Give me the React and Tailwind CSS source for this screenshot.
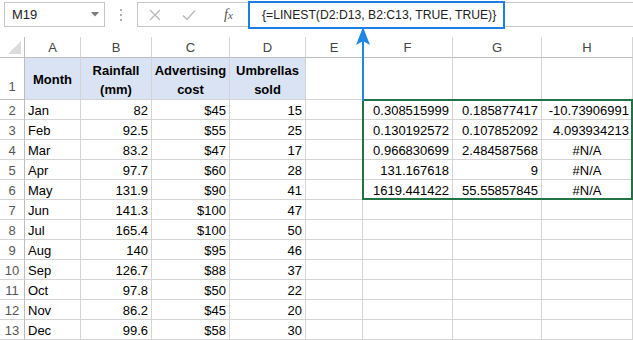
import React from 'react';

const cols = ['A', 'B', 'C', 'D', 'E', 'F', 'G', 'H'];

const data = [
    ['Jan', '82', '$45', '15'],
    ['Feb', '92.5', '$55', '25'],
    ['Mar', '83.2', '$47', '17'],
    ['Apr', '97.7', '$60', '28'],
    ['May', '131.9', '$90', '41'],
    ['Jun', '141.3', '$100', '47'],
    ['Jul', '165.4', '$100', '50'],
    ['Aug', '140', '$95', '46'],
    ['Sep', '126.7', '$88', '37'],
    ['Oct', '97.8', '$50', '22'],
    ['Nov', '86.2', '$45', '20'],
    ['Dec', '99.6', '$58', '30'],
];

// LINEST output, F2:H6
const stats = [
    ['0.308515999', '0.185877417', '-10.73906991'],
    ['0.130192572', '0.107852092', '4.093934213'],
    ['0.966830699', '2.484587568', '#N/A'],
    ['131.167618', '9', '#N/A'],
    ['1619.441422', '55.55857845', '#N/A'],
];

const cell = 'border-r border-b border-[#d4d4d4] px-[3px] pt-[3px] leading-[16px] whitespace-nowrap overflow-visible';

const Toolbar = () => (
    <div className="relative h-[37px] flex items-start pt-[2px]">
        <div className="ml-[4px] w-[101px] h-[25px] border border-[#c6c6c6] flex items-center justify-between pl-[7px] pr-[5px] text-[13px] text-[#222]">
            <span>M19</span>
            <svg width="8" height="5" viewBox="0 0 8 5"><path d="M0 0h8L4 4.5z" fill="#7a7a7a" /></svg>
        </div>
        <div className="w-[32px] h-[25px] flex flex-col items-center justify-center gap-[3px]">
            <span className="w-[2px] h-[2px] bg-[#b0b0b0]" />
            <span className="w-[2px] h-[2px] bg-[#b0b0b0]" />
            <span className="w-[2px] h-[2px] bg-[#b0b0b0]" />
        </div>
        <div className="flex-1 h-[25px] border-y border-l border-[#c6c6c6] flex items-center relative">
            <div className="w-[111px] flex items-center h-full">
                <svg className="ml-[11px]" width="12" height="12" viewBox="0 0 12 12">
                    <path d="M1 1L11 11M11 1L1 11" stroke="#b9b9b9" strokeWidth="1.3" />
                </svg>
                <svg className="ml-[21px]" width="14" height="12" viewBox="0 0 14 12">
                    <path d="M1 6.5L5 10.5L13 1.5" stroke="#b9b9b9" strokeWidth="1.4" fill="none" />
                </svg>
                <span className="ml-[28px] text-[14px] italic text-[#555]" style={{ fontFamily: '"Liberation Serif", serif' }}>
                    f<span className="text-[11px]">x</span>
                </span>
            </div>
            <div className="absolute left-[110px] top-[-2px] w-[257px] h-[28px] border-2 border-[#1a7fe0] bg-white flex items-center pl-[12px] text-[12.2px] text-[#222] whitespace-nowrap">
                {'{=LINEST(D2:D13, B2:C13, TRUE, TRUE)}'}
            </div>
        </div>
    </div>
);

const App = () => {
    return (
        <div
            className="relative w-[633px] h-[340px] overflow-hidden bg-white text-[13px] text-black"
            style={{ fontFamily: '"Liberation Sans", Arial, sans-serif' }}
        >
            <Toolbar />
            <div className="grid grid-cols-[25px_56px_71px_78px_76px_57px_90px_89px_91px] grid-rows-[21px_42px_repeat(12,20px)]">
                {/* column headers */}
                <div className="relative border-r border-b border-[#bdbdbd]">
                    <svg className="absolute right-[3px] bottom-[3px]" width="13" height="13" viewBox="0 0 13 13">
                        <path d="M13 0V13H0z" fill="#dcdcdc" />
                    </svg>
                </div>
                {cols.map((c) => (
                    <div key={c} className="border-r border-b border-[#d4d4d4] border-b-[#bdbdbd] flex items-center justify-center pt-[2px] text-[13px] text-[#444]">
                        {c}
                    </div>
                ))}

                {/* row 1 */}
                <div className="border-r border-b border-[#bdbdbd] flex items-end justify-center pb-[3px] text-[#555]">1</div>
                <div className="border-r border-b border-[#d4d4d4] bg-[#dae3f3] flex items-center justify-center pt-[3px] font-bold">Month</div>
                <div className="border-r border-b border-[#d4d4d4] bg-[#dae3f3] flex flex-col items-center justify-center pt-[3px] font-bold leading-[19px]">
                    <span>Rainfall</span><span>(mm)</span>
                </div>
                <div className="border-r border-b border-[#d4d4d4] bg-[#dae3f3] flex flex-col items-center justify-center pt-[3px] font-bold leading-[19px]">
                    <span>Advertising</span><span>cost</span>
                </div>
                <div className="border-r border-b border-[#d4d4d4] bg-[#dae3f3] flex flex-col items-center justify-center pt-[3px] font-bold leading-[19px]">
                    <span>Umbrellas</span><span>sold</span>
                </div>
                <div className="border-r border-b border-[#d4d4d4]" />
                <div className="border-r border-b border-[#d4d4d4]" />
                <div className="border-r border-b border-[#d4d4d4]" />
                <div className="border-r border-b border-[#d4d4d4]" />

                {/* data rows */}
                {data.map((row, i) => {
                    const s = stats[i];
                    return (
                        <React.Fragment key={row[0]}>
                            <div className="border-r border-b border-[#bdbdbd] border-b-[#d4d4d4] text-center pt-[3px] leading-[16px] text-[#555]">{i + 2}</div>
                            <div className={cell}>{row[0]}</div>
                            <div className={`${cell} text-right`}>{row[1]}</div>
                            <div className={`${cell} text-right`}>{row[2]}</div>
                            <div className={`${cell} text-right`}>{row[3]}</div>
                            <div className={cell} />
                            {s ? (
                                s.map((v, j) => (
                                    <div key={j} className={`${cell} ${v === '#N/A' ? 'text-center' : 'text-right'}`}>{v}</div>
                                ))
                            ) : (
                                <>
                                    <div className={cell} />
                                    <div className={cell} />
                                    <div className={cell} />
                                </>
                            )}
                        </React.Fragment>
                    );
                })}
            </div>

            {/* selection around LINEST results */}
            <div className="absolute left-[362px] top-[99px] w-[271px] h-[101px] border-2 border-[#217346] pointer-events-none" />

            {/* arrow from formula to results */}
            <svg className="absolute left-[355px] top-[27px] pointer-events-none" width="16" height="74" viewBox="0 0 16 74">
                <path d="M8 12V74" stroke="#1f86e6" strokeWidth="2" />
                <path d="M8 0L15 18L8 14L1 18z" fill="#1f86e6" />
            </svg>
        </div>
    );
};

export default App;
